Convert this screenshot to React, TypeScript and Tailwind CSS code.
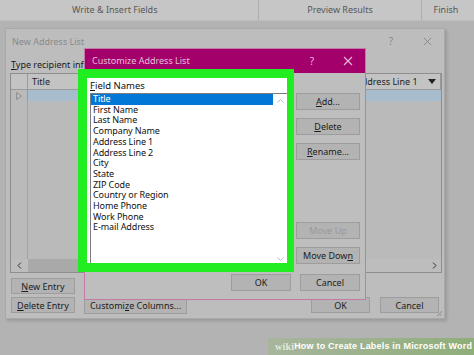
import React from 'react'

const btn =
  'flex items-center justify-center whitespace-nowrap border border-[#9d9d9d] bg-[#b3b3b3] text-[9px] leading-none text-[#1c1c1c]'

const fields = [
  'Title',
  'First Name',
  'Last Name',
  'Company Name',
  'Address Line 1',
  'Address Line 2',
  'City',
  'State',
  'ZIP Code',
  'Country or Region',
  'Home Phone',
  'Work Phone',
  'E-mail Address',
]

function CloseX({ color, size = 9 }: { color: string; size?: number }) {
  return (
    <svg width={size} height={size} viewBox="0 0 10 10">
      <path d="M1 1 L9 9 M9 1 L1 9" stroke={color} strokeWidth="1.1" fill="none" />
    </svg>
  )
}

function Ribbon() {
  return (
    <div className="flex h-[21px] border-b border-[#bcbcbc] bg-[#c6c6c6] text-[9px] text-[#585858]">
      <div className="flex w-[259px] items-end border-r border-[#adadad] pb-[4px] pl-[72px]">
        Write &amp; Insert Fields
      </div>
      <div className="flex w-[163px] items-end justify-center border-r border-[#adadad] pb-[4px]">
        Preview Results
      </div>
      <div className="flex flex-1 items-end justify-center pb-[4px] pr-[4px]">Finish</div>
    </div>
  )
}

function NewAddressList() {
  return (
    <div className="absolute left-[5px] top-[28px] flex h-[291px] w-[440px] flex-col border border-[#a9a9a9] bg-[#bdbdbd] shadow-[2px_2px_3px_rgba(0,0,0,0.15)]">
      <div className="flex h-[25px] items-center pl-[6px] pr-[12px] text-[9px] text-[#8a8a8a]">
        <span>New Address List</span>
        <span className="ml-auto mr-[30px] text-[10px]">?</span>
        <CloseX color="#8a8a8a" />
      </div>
      <div className="mt-[4px] h-[14px] w-[78px] overflow-hidden whitespace-nowrap pl-[5px] text-[9px] leading-[14px] text-[#1a1a1a]">
        <span className="underline">T</span>ype recipient information in the table
      </div>
      <div className="ml-[4px] mt-[1px] flex h-[200px] w-[432px] flex-col border border-[#8e8e8e] bg-[#bababa]">
        <div className="flex h-[16px] border-b border-[#9a9a9a] bg-[#c3c3c3] text-[9px] leading-[15px] text-[#222]">
          <div className="w-[17px] border-r border-[#9a9a9a]" />
          <div className="w-[325px] border-r border-[#9a9a9a] pl-[4px]">Title</div>
          <div className="flex flex-1 items-center border-r border-[#9a9a9a] pl-[3px] pr-[4px]">
            <span className="whitespace-nowrap">Address Line 1</span>
            <svg className="ml-auto" width="8" height="5" viewBox="0 0 8 5">
              <path d="M0 0 H8 L4 5 Z" fill="#222" />
            </svg>
          </div>
        </div>
        <div className="flex h-[11px]">
          <div className="flex w-[17px] items-center justify-center border-r border-[#9a9a9a]">
            <svg width="6" height="8" viewBox="0 0 6 8">
              <path d="M0.5 0.5 L5.5 4 L0.5 7.5 Z" fill="none" stroke="#8a8a8a" strokeWidth="0.9" />
            </svg>
          </div>
          <div className="flex-1 bg-[#a7bccd]" />
        </div>
        <div className="flex flex-1">
          <div className="w-[17px] border-r border-[#a3a3a3]" />
          <div className="flex-1" />
        </div>
        <div className="flex h-[13px] items-center bg-[#bdbdbd]">
          <div className="flex w-[17px] items-center justify-center">
            <svg width="5" height="7" viewBox="0 0 5 7">
              <path d="M4 0.5 L1 3.5 L4 6.5" fill="none" stroke="#333" strokeWidth="1" />
            </svg>
          </div>
          <div className="h-full w-[51px] bg-[#a9a9a9]" />
          <div className="flex-1" />
          <div className="flex w-[14px] items-center justify-center">
            <svg width="5" height="7" viewBox="0 0 5 7">
              <path d="M1 0.5 L4 3.5 L1 6.5" fill="none" stroke="#333" strokeWidth="1" />
            </svg>
          </div>
        </div>
      </div>
      <div className={`${btn} ml-[5px] mt-[5px] h-[16px] w-[64px]`}>
        <span>
          <span className="underline">N</span>ew Entry
        </span>
      </div>
      <div className="mt-[3px] flex pl-[5px] pr-[5px]">
        <div className={`${btn} h-[16px] w-[64px]`}>
          <span>
            <span className="underline">D</span>elete Entry
          </span>
        </div>
        <div className={`${btn} ml-[9px] h-[17px] w-[103px] items-end border-[#3f6f9f] pb-[3px]`}>
          <span>
            Customi<span className="underline">z</span>e Columns...
          </span>
        </div>
        <div className={`${btn} ml-auto h-[16px] w-[59px]`}>OK</div>
        <div className={`${btn} ml-[10px] h-[16px] w-[59px]`}>Cancel</div>
      </div>
      <svg className="absolute bottom-[1px] right-[1px]" width="7" height="7" viewBox="0 0 7 7">
        <path d="M6 1 L1 6 M6 3.5 L3.5 6" stroke="#8e8e8e" strokeWidth="1" />
      </svg>
    </div>
  )
}

function CustomizeDialog() {
  return (
    <div className="absolute left-[84px] top-[48px] flex h-[252px] w-[282px] flex-col border border-[#c47aa6] bg-[#bebebe]">
      <div className="flex h-[24px] items-center bg-[#a3006c] pl-[7px] pr-[12px] text-[9px] text-[#e7bcd7]">
        <span>Customize Address List</span>
        <span className="ml-auto mr-[29px] text-[10px]">?</span>
        <CloseX color="#e7bcd7" size={10} />
      </div>
      <div className="flex flex-1">
        <div className="flex-1" />
        <div className="mr-[5px] flex w-[64px] flex-col gap-[8px] pt-[20px]">
          <div className={`${btn} h-[17px]`}>
            <span>
              <span className="underline">A</span>dd...
            </span>
          </div>
          <div className={`${btn} h-[17px]`}>
            <span>
              <span className="underline">D</span>elete
            </span>
          </div>
          <div className={`${btn} h-[17px]`}>
            <span>
              <span className="underline">R</span>ename...
            </span>
          </div>
          <div className={`${btn} mt-[54px] h-[17px] text-[#9a9a9a]`}>Move Up</div>
          <div className={`${btn} h-[17px]`}>
            <span>
              Move Dow<span className="underline">n</span>
            </span>
          </div>
        </div>
      </div>
      <div className="flex h-[35px] items-start justify-end gap-[9px] pr-[5px] pt-[10px]">
        <div className={`${btn} h-[17px] w-[60px] border-[#3f6f9f]`}>OK</div>
        <div className={`${btn} h-[17px] w-[60px]`}>Cancel</div>
      </div>
    </div>
  )
}

function Highlight() {
  return (
    <div className="absolute left-[78px] top-[69px] flex h-[203px] w-[216px] flex-col border-[9px] border-r-[7px] border-[#21ee21] bg-white">
      <div className="h-[14px] pl-[3px] text-[9.5px] leading-[15px] text-[#111]">
        <span className="underline">F</span>ield Names
      </div>
      <div className="ml-[3px] mt-[1px] flex flex-1 overflow-hidden border-l border-t border-[#7c7c7c]">
        <div className="w-[182px] whitespace-nowrap text-[9px] leading-[10.7px] tracking-[-0.1px] text-[#111]">
          {fields.map((f, i) => (
            <div
              key={f}
              className={i === 0 ? 'bg-[#0078d7] pl-[2px] text-white' : 'pl-[2px]'}
            >
              {f}
            </div>
          ))}
        </div>
        <div className="flex flex-1 flex-col items-center justify-between pb-[2px] pt-[5px]">
          <svg width="7" height="4" viewBox="0 0 7 4">
            <path d="M0.5 3.5 L3.5 0.5 L6.5 3.5" fill="none" stroke="#b9b9b9" strokeWidth="1" />
          </svg>
          <svg width="7" height="4" viewBox="0 0 7 4">
            <path d="M0.5 0.5 L3.5 3.5 L6.5 0.5" fill="none" stroke="#c5b3d6" strokeWidth="1" />
          </svg>
        </div>
      </div>
    </div>
  )
}

function Watermark() {
  return (
    <div className="absolute bottom-0 right-0 flex h-[17px] w-[206px] items-center whitespace-nowrap bg-gradient-to-r from-[#a7b59d] to-[#8fae7a] pl-[7px] font-['Liberation_Sans',sans-serif] text-[9px] font-bold tracking-[0.2px] text-white">
      <span className="font-['Liberation_Serif',serif] text-[10px] text-[#e1e9d8]">wiki</span>
      <span>How to Create Labels in Microsoft Word</span>
    </div>
  )
}

export default function App() {
  return (
    <div className="relative h-[355px] w-[474px] overflow-hidden bg-[#b3b3b3] font-['Noto_Sans',sans-serif]">
      <Ribbon />
      <NewAddressList />
      <CustomizeDialog />
      <Highlight />
      <Watermark />
    </div>
  )
}
